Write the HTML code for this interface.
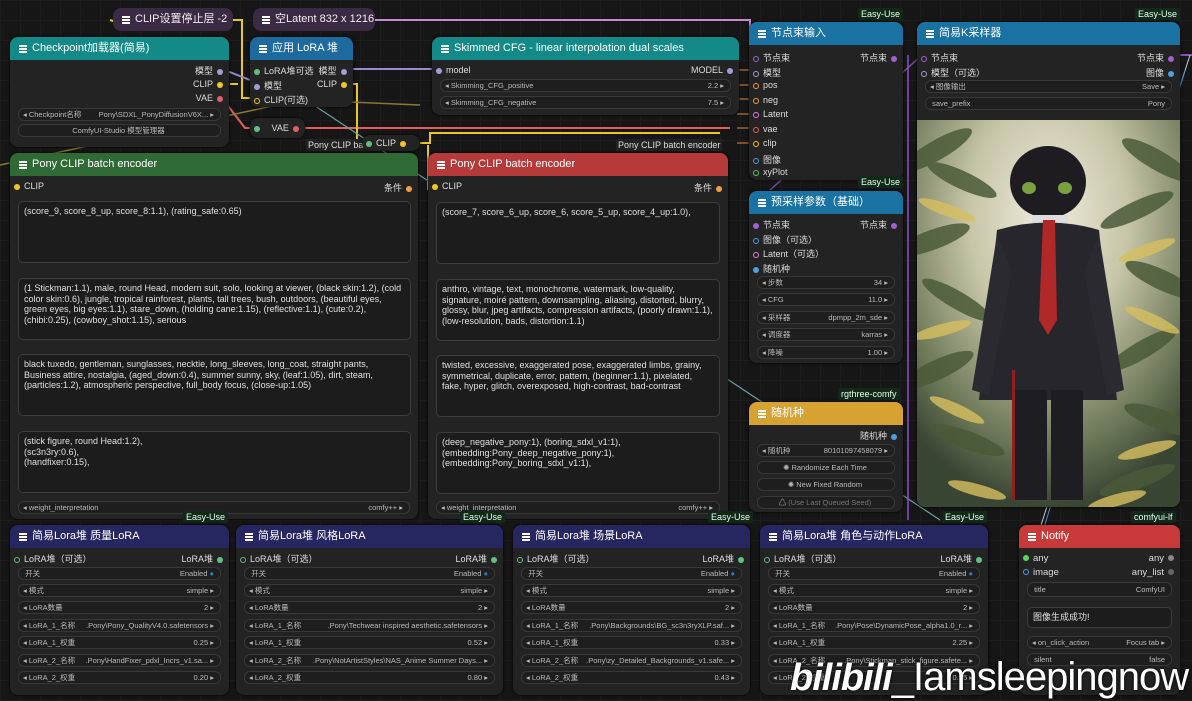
<!DOCTYPE html>
<html><head><meta charset="utf-8"><style>
*{box-sizing:border-box;margin:0;padding:0}
body{width:1192px;height:701px;overflow:hidden;background:#161616;font-family:"Liberation Sans","Noto Sans CJK SC",sans-serif;color:#ddd;position:relative;
background-image:linear-gradient(#1d1d1d 1px,transparent 1px),linear-gradient(90deg,#1d1d1d 1px,transparent 1px);background-size:20px 20px}
.n{position:absolute;background:#232323;border-radius:8px;box-shadow:0 0 3px #000}
.t{position:absolute;left:0;right:0;top:0;height:23px;border-radius:8px 8px 0 0;color:#fff;font-size:11px;line-height:23px;padding-left:22px;white-space:nowrap}
.t::before{content:"";position:absolute;left:9px;top:8px;width:8px;height:1.5px;background:#fff;box-shadow:0 3px 0 #fff,0 6px 0 #fff}
.p{position:absolute;font-size:9px;white-space:nowrap;color:#ddd}
.d{display:inline-block;width:6px;height:6px;border-radius:50%;vertical-align:middle;margin:0 4px}
.w{position:absolute;height:13px;background:#1e1e1e;border:1px solid #383838;border-radius:6px;font-size:7.5px;line-height:11px;color:#bbb;padding:0 6px 0 4px;white-space:nowrap;overflow:hidden}
.w .r{position:absolute;right:6px;top:0}
.ta{position:absolute;background:#1c1c1c;border:1px solid #3c3c3c;border-radius:5px;font-size:9px;line-height:10.5px;color:#e0e0e0;padding:4px 5px}
.lab{position:absolute;background:#14281a;color:#dfe;font-size:9px;padding:1px 3px;border-radius:2px}
.pill{position:absolute;height:23px;border-radius:8px;background:#3b2a44;color:#eee;font-size:11px;line-height:23px;padding-left:22px}
.pill::before{content:"";position:absolute;left:9px;top:8px;width:8px;height:1.5px;background:#fff;box-shadow:0 3px 0 #fff,0 6px 0 #fff}
</style></head><body>
<svg style="position:absolute;left:0;top:0" width="1192" height="701">
<g fill="none" stroke-width="2">
<path d="M233 20 H242 V98 H258" stroke="#e8c820"/>
<path d="M375 20 H750 V113" stroke="#c88ad0"/>
<path d="M222 69 L250 80" stroke="#a088d0"/>
<path d="M230 84 H238" stroke="#e8c820"/>
<path d="M222 98 L245 128 H255" stroke="#e06060"/>
<path d="M300 128 H730" stroke="#e06060"/>
<path d="M352 84 H357 V145" stroke="#e8c820"/>
<path d="M352 69 H435" stroke="#a088d0"/>
<path d="M420 143 H430 V133 H720" stroke="#e8c820"/>
<path d="M428 145 V190" stroke="#e8c820"/>
<path d="M10 185 H15" stroke="#e8c820"/>
<path d="M110 20 L140 30" stroke="#e8c820"/>
<path d="M0 165 L300 100 L420 105" stroke="#8a7a30" stroke-width="1.5"/>
<path d="M300 96 L940 520" stroke="#6aa0a0" stroke-width="1.2"/>
<path d="M770 190 L920 57" stroke="#7a4aa0" stroke-width="1.5"/>
<path d="M908 55 V520" stroke="#8a50c0" stroke-width="1.5"/>
<path d="M1180 55 H1192" stroke="#8a50c0"/>
<path d="M1190 55 L1030 560" stroke="#c8c8d8" stroke-width="1"/>
<path d="M1185 70 L1030 573" stroke="#4a8ad0" stroke-width="1"/>
<path d="M737 70 H750 M737 85 H750 M737 99 H750 M737 114 H750 M737 128 H750 M737 143 H750" stroke="#c07030" stroke-width="1.2"/>
</g></svg>

<div class="pill" style="left:113px;top:8px;width:120px">CLIP设置停止层 -2</div>
<div class="pill" style="left:253px;top:8px;width:122px">空Latent 832 x 1216</div>

<div class="n" style="left:10px;top:37px;width:219px;height:110px">
<div class="t" style="background:#138a88">Checkpoint加载器(简易)</div>
<div class="p" style="right:2px;top:27px">模型<span class="d" style="background:#a89ad8"></span></div>
<div class="p" style="right:2px;top:42px">CLIP<span class="d" style="background:#f0c820"></span></div>
<div class="p" style="right:2px;top:56px">VAE<span class="d" style="background:#e06060"></span></div>
<div class="w" style="left:8px;right:8px;top:71px">◂ Checkpoint名称<span class="r">Pony\SDXL_PonyDiffusionV6X... ▸</span></div>
<div class="w" style="left:8px;right:8px;top:87px;text-align:center">ComfyUI-Studio 模型管理器</div>
</div>

<div class="n" style="left:250px;top:37px;width:103px;height:70px">
<div class="t" style="background:#1c6a9e">应用 LoRA 堆</div>
<div class="p" style="left:0;top:27px"><span class="d" style="background:#60c080"></span>LoRA堆可选 &nbsp;模型<span class="d" style="background:#a89ad8"></span></div>
<div class="p" style="left:0;top:42px"><span class="d" style="background:#a89ad8"></span>模型</div>
<div class="p" style="right:2px;top:42px">CLIP<span class="d" style="background:#f0c820"></span></div>
<div class="p" style="left:0;top:56px"><span class="d" style="border:1.5px solid #f0c820"></span>CLIP(可选)</div>
</div>
<div class="n" style="left:250px;top:118px;width:55px;height:20px"><div class="p" style="left:0;top:5px"><span class="d" style="background:#60c080"></span>&nbsp;&nbsp;&nbsp;VAE<span class="d" style="background:#e06060"></span></div></div>
<div class="p" style="left:306px;top:139px;font-size:9px;background:#222;padding:1px 2px">Pony CLIP batch</div>
<div class="n" style="left:362px;top:135px;width:58px;height:16px"><div class="p" style="left:0;top:3px"><span class="d" style="background:#60c080"></span>CLIP<span class="d" style="background:#f0c820"></span></div></div>
<div class="p" style="left:616px;top:139px;background:#222;padding:1px 2px">Pony CLIP batch encoder</div>

<div class="n" style="left:432px;top:37px;width:307px;height:78px">
<div class="t" style="background:#138a88">Skimmed CFG - linear interpolation dual scales</div>
<div class="p" style="left:0;top:28px"><span class="d" style="background:#a89ad8"></span>model</div>
<div class="p" style="right:2px;top:28px">MODEL<span class="d" style="background:#a89ad8"></span></div>
<div class="w" style="left:8px;right:8px;top:42px">◂ Skimming_CFG_positive<span class="r">2.2 ▸</span></div>
<div class="w" style="left:8px;right:8px;top:59px">◂ Skimming_CFG_negative<span class="r">7.5 ▸</span></div>
</div>

<div class="n" style="left:10px;top:153px;width:408px;height:366px">
<div class="t" style="background:#2f6a35">Pony CLIP batch encoder</div>
<div class="p" style="left:0;top:28px"><span class="d" style="background:#f0c820"></span>CLIP</div>
<div class="p" style="right:2px;top:28px">条件<span class="d" style="background:#f0a040"></span></div>
<div class="ta" style="left:8px;top:48px;width:393px;height:62px">(score_9, score_8_up, score_8:1.1), (rating_safe:0.65)</div>
<div class="ta" style="left:8px;top:125px;width:393px;height:62px">(1 Stickman:1.1), male, round Head, modern suit, solo, looking at viewer, (black skin:1.2), (cold color skin:0.6), jungle, tropical rainforest, plants, tall trees, bush, outdoors, (beautiful eyes, green eyes, big eyes:1.1), stare_down, (holding cane:1.15), (reflective:1.1), (cute:0.2), (chibi:0.25), (cowboy_shot:1.15), serious</div>
<div class="ta" style="left:8px;top:201px;width:393px;height:62px">black tuxedo, gentleman, sunglasses, necktie, long_sleeves, long_coat, straight pants, Business attire, nostalgia, (aged_down:0.4), summer sunny, sky, (leaf:1.05), dirt, steam, (particles:1.2), atmospheric perspective, full_body focus, (close-up:1.05)</div>
<div class="ta" style="left:8px;top:278px;width:393px;height:62px">(stick figure, round Head:1.2),<br>(sc3n3ry:0.6),<br>(handfixer:0.15),</div>
<div class="w" style="left:8px;right:8px;top:348px">◂ weight_interpretation<span class="r">comfy++ ▸</span></div>
</div>

<div class="n" style="left:428px;top:153px;width:300px;height:366px">
<div class="t" style="background:#b63a3a">Pony CLIP batch encoder</div>
<div class="p" style="left:0;top:28px"><span class="d" style="background:#f0c820"></span>CLIP</div>
<div class="p" style="right:2px;top:28px">条件<span class="d" style="background:#f0a040"></span></div>
<div class="ta" style="left:8px;top:49px;width:284px;height:62px">(score_7, score_6_up, score_6, score_5_up, score_4_up:1.0),</div>
<div class="ta" style="left:8px;top:126px;width:284px;height:62px">anthro, vintage, text, monochrome, watermark, low-quality, signature, moiré pattern, downsampling, aliasing, distorted, blurry, glossy, blur, jpeg artifacts, compression artifacts, (poorly drawn:1.1), (low-resolution, bads, distortion:1.1)</div>
<div class="ta" style="left:8px;top:202px;width:284px;height:62px">twisted, excessive, exaggerated pose, exaggerated limbs, grainy, symmetrical, duplicate, error, pattern, (beginner:1.1), pixelated, fake, hyper, glitch, overexposed, high-contrast, bad-contrast</div>
<div class="ta" style="left:8px;top:279px;width:284px;height:62px">(deep_negative_pony:1), (boring_sdxl_v1:1),<br>(embedding:Pony_deep_negative_pony:1),<br>(embedding:Pony_boring_sdxl_v1:1),</div>
<div class="w" style="left:8px;right:8px;top:348px">◂ weight_interpretation<span class="r">comfy++ ▸</span></div>
</div>

<div class="lab" style="left:858px;top:8px">Easy-Use</div>
<div class="n" style="left:749px;top:22px;width:154px;height:158px">
<div class="t" style="background:#1a72a3">节点束输入</div>
<div class="p" style="left:0;top:29px"><span class="d" style="border:1.5px solid #a060d0"></span>节点束</div>
<div class="p" style="right:2px;top:29px">节点束<span class="d" style="background:#a060d0"></span></div>
<div class="p" style="left:0;top:44px"><span class="d" style="border:1.5px solid #a89ad8"></span>模型</div>
<div class="p" style="left:0;top:58px"><span class="d" style="border:1.5px solid #f0a040"></span>pos</div>
<div class="p" style="left:0;top:73px"><span class="d" style="border:1.5px solid #f0a040"></span>neg</div>
<div class="p" style="left:0;top:87px"><span class="d" style="border:1.5px solid #e080e0"></span>Latent</div>
<div class="p" style="left:0;top:102px"><span class="d" style="border:1.5px solid #e06060"></span>vae</div>
<div class="p" style="left:0;top:116px"><span class="d" style="border:1.5px solid #f0c820"></span>clip</div>
<div class="p" style="left:0;top:131px"><span class="d" style="border:1.5px solid #50a0e0"></span>图像</div>
<div class="p" style="left:0;top:145px"><span class="d" style="border:1.5px solid #60c060"></span>xyPlot</div>
</div>

<div class="lab" style="left:858px;top:176px">Easy-Use</div>
<div class="n" style="left:749px;top:191px;width:154px;height:172px">
<div class="t" style="background:#1a72a3">预采样参数（基础）</div>
<div class="p" style="left:0;top:27px"><span class="d" style="background:#a060d0"></span>节点束</div>
<div class="p" style="right:2px;top:27px">节点束<span class="d" style="background:#a060d0"></span></div>
<div class="p" style="left:0;top:42px"><span class="d" style="border:1.5px solid #50a0e0"></span>图像（可选）</div>
<div class="p" style="left:0;top:56px"><span class="d" style="border:1.5px solid #e080e0"></span>Latent（可选）</div>
<div class="p" style="left:0;top:71px"><span class="d" style="background:#50a0e0"></span>随机种</div>
<div class="w" style="left:8px;right:8px;top:85px">◂ 步数<span class="r">34 ▸</span></div>
<div class="w" style="left:8px;right:8px;top:102px">◂ CFG<span class="r">11.0 ▸</span></div>
<div class="w" style="left:8px;right:8px;top:120px">◂ 采样器<span class="r">dpmpp_2m_sde ▸</span></div>
<div class="w" style="left:8px;right:8px;top:137px">◂ 调度器<span class="r">karras ▸</span></div>
<div class="w" style="left:8px;right:8px;top:155px">◂ 降噪<span class="r">1.00 ▸</span></div>
</div>

<div class="lab" style="left:838px;top:388px">rgthree-comfy</div>
<div class="n" style="left:749px;top:402px;width:154px;height:110px">
<div class="t" style="background:#d6a232">随机种</div>
<div class="p" style="right:2px;top:27px">随机种<span class="d" style="background:#50a0e0"></span></div>
<div class="w" style="left:8px;right:8px;top:42px">◂ 随机种<span class="r">80101097458079 ▸</span></div>
<div class="w" style="left:8px;right:8px;top:59px;text-align:center">✺ Randomize Each Time</div>
<div class="w" style="left:8px;right:8px;top:76px;text-align:center">✺ New Fixed Random</div>
<div class="w" style="left:8px;right:8px;top:94px;text-align:center;color:#777">♺ (Use Last Queued Seed)</div>
</div>

<div class="lab" style="left:1135px;top:8px">Easy-Use</div>
<div class="n" style="left:917px;top:22px;width:263px;height:485px;overflow:hidden">
<div class="t" style="background:#1a72a3">简易K采样器</div>
<div class="p" style="left:0;top:29px"><span class="d" style="border:1.5px solid #a060d0"></span>节点束</div>
<div class="p" style="right:2px;top:29px">节点束<span class="d" style="background:#a060d0"></span></div>
<div class="p" style="left:0;top:44px"><span class="d" style="border:1.5px solid #a89ad8"></span>模型（可选）</div>
<div class="p" style="right:2px;top:44px">图像<span class="d" style="background:#50a0e0"></span></div>
<div class="w" style="left:8px;right:8px;top:58px">◂ 图像输出<span class="r">Save ▸</span></div>
<div class="w" style="left:8px;right:8px;top:75px">&nbsp;save_prefix<span class="r">Pony</span></div>
<svg style="position:absolute;left:0;top:98px" width="263" height="387">
<defs><radialGradient id="bg" cx="50%" cy="25%" r="75%"><stop offset="0" stop-color="#f0ece0"/><stop offset=".4" stop-color="#c8c6a8"/><stop offset=".8" stop-color="#6a7656"/><stop offset="1" stop-color="#3a4634"/></radialGradient></defs>
<rect width="263" height="387" fill="url(#bg)"/>
<g fill="#4a5a38" opacity=".85">
<ellipse cx="20" cy="30" rx="40" ry="10" transform="rotate(-30 20 30)"/><ellipse cx="45" cy="60" rx="38" ry="9" transform="rotate(25 45 60)"/>
<ellipse cx="15" cy="120" rx="40" ry="10" transform="rotate(-20 15 120)"/><ellipse cx="40" cy="180" rx="40" ry="9" transform="rotate(30 40 180)"/>
<ellipse cx="20" cy="250" rx="40" ry="10" transform="rotate(-25 20 250)"/><ellipse cx="50" cy="320" rx="40" ry="9" transform="rotate(20 50 320)"/>
<ellipse cx="240" cy="40" rx="40" ry="10" transform="rotate(30 240 40)"/><ellipse cx="220" cy="90" rx="40" ry="9" transform="rotate(-25 220 90)"/>
<ellipse cx="245" cy="160" rx="40" ry="10" transform="rotate(25 245 160)"/><ellipse cx="225" cy="230" rx="40" ry="9" transform="rotate(-30 225 230)"/>
<ellipse cx="245" cy="300" rx="40" ry="10" transform="rotate(20 245 300)"/><ellipse cx="220" cy="360" rx="40" ry="9" transform="rotate(-20 220 360)"/>
</g>
<g fill="#d8c060" opacity=".8">
<ellipse cx="30" cy="90" rx="30" ry="6" transform="rotate(20 30 90)"/><ellipse cx="25" cy="210" rx="30" ry="6" transform="rotate(-15 25 210)"/>
<ellipse cx="40" cy="290" rx="30" ry="6" transform="rotate(25 40 290)"/><ellipse cx="230" cy="130" rx="30" ry="6" transform="rotate(-20 230 130)"/>
<ellipse cx="235" cy="200" rx="30" ry="6" transform="rotate(25 235 200)"/><ellipse cx="230" cy="330" rx="30" ry="6" transform="rotate(-15 230 330)"/>
<ellipse cx="60" cy="370" rx="30" ry="6" transform="rotate(15 60 370)"/><ellipse cx="200" cy="380" rx="30" ry="6" transform="rotate(-15 200 380)"/>
</g>
<ellipse cx="131" cy="62" rx="38" ry="36" fill="#1e1c20"/>
<ellipse cx="112" cy="68" rx="7" ry="6" fill="#7aa040"/><ellipse cx="148" cy="68" rx="7" ry="6" fill="#7aa040"/>
<rect x="115" y="95" width="36" height="40" fill="#ddd"/>
<path d="M80 110 Q131 95 182 110 L200 280 L62 280 Z" fill="#26262c"/>
<path d="M80 115 L55 270 L72 275 L95 150 Z" fill="#2a2a30"/><path d="M182 115 L207 270 L190 275 L167 150 Z" fill="#2a2a30"/>
<path d="M126 100 H138 L140 200 L131 215 L122 200 Z" fill="#b02828"/>
<rect x="98" y="270" width="32" height="110" fill="#1e1e22"/><rect x="134" y="270" width="32" height="110" fill="#1e1e22"/>
<rect x="95" y="250" width="3" height="130" fill="#902020"/>
</svg>
</div>

<div class="lab" style="left:183px;top:511px">Easy-Use</div>
<div class="lab" style="left:460px;top:511px">Easy-Use</div>
<div class="lab" style="left:708px;top:511px">Easy-Use</div>
<div class="lab" style="left:942px;top:511px">Easy-Use</div>
<div class="lab" style="left:1131px;top:511px">comfyui-lf</div>

<div class="n" style="left:10px;top:525px;width:219px;height:170px">
<div class="t" style="background:#262660">简易Lora堆 质量LoRA</div>
<div class="p" style="left:0;top:27px"><span class="d" style="border:1.5px solid #60c080"></span>LoRA堆（可选）</div>
<div class="p" style="right:2px;top:27px">LoRA堆<span class="d" style="background:#60c080"></span></div>
<div class="w" style="left:8px;right:8px;top:42px">&nbsp;开关<span class="r">Enabled <span style="color:#2a80c0">●</span></span></div>
<div class="w" style="left:8px;right:8px;top:59px">◂ 模式<span class="r">simple ▸</span></div>
<div class="w" style="left:8px;right:8px;top:76px">◂ LoRA数量<span class="r">2 ▸</span></div>
<div class="w" style="left:8px;right:8px;top:94px">◂ LoRA_1_名称<span class="r">.Pony\Pony_QualityV4.0.safetensors ▸</span></div>
<div class="w" style="left:8px;right:8px;top:111px">◂ LoRA_1_权重<span class="r">0.25 ▸</span></div>
<div class="w" style="left:8px;right:8px;top:129px">◂ LoRA_2_名称<span class="r">.Pony\HandFixer_pdxl_Incrs_v1.sa... ▸</span></div>
<div class="w" style="left:8px;right:8px;top:146px">◂ LoRA_2_权重<span class="r">0.20 ▸</span></div>
</div>

<div class="n" style="left:236px;top:525px;width:267px;height:170px">
<div class="t" style="background:#262660">简易Lora堆 风格LoRA</div>
<div class="p" style="left:0;top:27px"><span class="d" style="border:1.5px solid #60c080"></span>LoRA堆（可选）</div>
<div class="p" style="right:2px;top:27px">LoRA堆<span class="d" style="background:#60c080"></span></div>
<div class="w" style="left:8px;right:8px;top:42px">&nbsp;开关<span class="r">Enabled <span style="color:#2a80c0">●</span></span></div>
<div class="w" style="left:8px;right:8px;top:59px">◂ 模式<span class="r">simple ▸</span></div>
<div class="w" style="left:8px;right:8px;top:76px">◂ LoRA数量<span class="r">2 ▸</span></div>
<div class="w" style="left:8px;right:8px;top:94px">◂ LoRA_1_名称<span class="r">.Pony\Techwear inspired aesthetic.safetensors ▸</span></div>
<div class="w" style="left:8px;right:8px;top:111px">◂ LoRA_1_权重<span class="r">0.52 ▸</span></div>
<div class="w" style="left:8px;right:8px;top:129px">◂ LoRA_2_名称<span class="r">.Pony\NotArtistStyles\NAS_Anime Summer Days... ▸</span></div>
<div class="w" style="left:8px;right:8px;top:146px">◂ LoRA_2_权重<span class="r">0.80 ▸</span></div>
</div>

<div class="n" style="left:513px;top:525px;width:237px;height:170px">
<div class="t" style="background:#262660">简易Lora堆 场景LoRA</div>
<div class="p" style="left:0;top:27px"><span class="d" style="border:1.5px solid #60c080"></span>LoRA堆（可选）</div>
<div class="p" style="right:2px;top:27px">LoRA堆<span class="d" style="background:#60c080"></span></div>
<div class="w" style="left:8px;right:8px;top:42px">&nbsp;开关<span class="r">Enabled <span style="color:#2a80c0">●</span></span></div>
<div class="w" style="left:8px;right:8px;top:59px">◂ 模式<span class="r">simple ▸</span></div>
<div class="w" style="left:8px;right:8px;top:76px">◂ LoRA数量<span class="r">2 ▸</span></div>
<div class="w" style="left:8px;right:8px;top:94px">◂ LoRA_1_名称<span class="r">.Pony\Backgrounds\BG_sc3n3ryXLP.saf... ▸</span></div>
<div class="w" style="left:8px;right:8px;top:111px">◂ LoRA_1_权重<span class="r">0.33 ▸</span></div>
<div class="w" style="left:8px;right:8px;top:129px">◂ LoRA_2_名称<span class="r">.Pony\zy_Detailed_Backgrounds_v1.safe... ▸</span></div>
<div class="w" style="left:8px;right:8px;top:146px">◂ LoRA_2_权重<span class="r">0.43 ▸</span></div>
</div>

<div class="n" style="left:760px;top:525px;width:228px;height:170px">
<div class="t" style="background:#262660">简易Lora堆 角色与动作LoRA</div>
<div class="p" style="left:0;top:27px"><span class="d" style="border:1.5px solid #60c080"></span>LoRA堆（可选）</div>
<div class="p" style="right:2px;top:27px">LoRA堆<span class="d" style="background:#60c080"></span></div>
<div class="w" style="left:8px;right:8px;top:42px">&nbsp;开关<span class="r">Enabled <span style="color:#2a80c0">●</span></span></div>
<div class="w" style="left:8px;right:8px;top:59px">◂ 模式<span class="r">simple ▸</span></div>
<div class="w" style="left:8px;right:8px;top:76px">◂ LoRA数量<span class="r">2 ▸</span></div>
<div class="w" style="left:8px;right:8px;top:94px">◂ LoRA_1_名称<span class="r">.Pony\Pose\DynamicPose_alpha1.0_r... ▸</span></div>
<div class="w" style="left:8px;right:8px;top:111px">◂ LoRA_1_权重<span class="r">2.25 ▸</span></div>
<div class="w" style="left:8px;right:8px;top:129px">◂ LoRA_2_名称<span class="r">.Pony\Stickman_stick_figure.safete... ▸</span></div>
<div class="w" style="left:8px;right:8px;top:146px">◂ LoRA_2_权重<span class="r">0.95 ▸</span></div>
</div>

<div class="n" style="left:1019px;top:525px;width:161px;height:170px">
<div class="t" style="background:#c83a3a">Notify</div>
<div class="p" style="left:0;top:28px;font-size:9.5px"><span class="d" style="background:#60d060"></span>any</div>
<div class="p" style="right:2px;top:28px;font-size:9.5px">any<span class="d" style="background:#888"></span></div>
<div class="p" style="left:0;top:42px;font-size:9.5px"><span class="d" style="border:1.5px solid #50a0e0"></span>image</div>
<div class="p" style="right:2px;top:42px;font-size:9.5px">any_list<span class="d" style="background:#666"></span></div>
<div class="w" style="left:8px;right:8px;top:57px;height:15px;line-height:13px">&nbsp;title<span class="r">ComfyUI</span></div>
<div class="ta" style="left:8px;top:82px;width:145px;height:21px;font-size:9px">图像生成成功!</div>
<div class="w" style="left:8px;right:8px;top:111px">◂ on_click_action<span class="r">Focus tab ▸</span></div>
<div class="w" style="left:8px;right:8px;top:128px">&nbsp;silent<span class="r">false</span></div>
</div>

<div style="position:absolute;left:790px;top:655px;font-size:40px;line-height:44px;color:#fff;white-space:nowrap;text-shadow:0 0 3px #000;letter-spacing:-1px"><b style="font-style:italic;font-size:38px">bilibili</b>_Iamsleepingnow</div>
</body></html>
